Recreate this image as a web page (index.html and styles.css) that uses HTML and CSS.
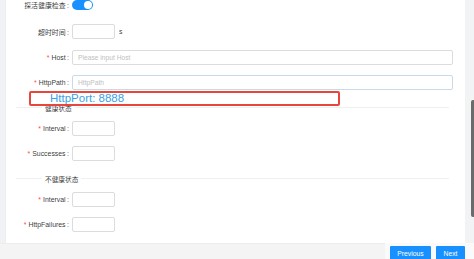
FILE: index.html
```html
<!DOCTYPE html>
<html>
<head>
<meta charset="utf-8">
<link rel="stylesheet" href="styles.css">
</head>
<body>
<div class="page">
  <div class="main">
    <div class="gutter-left"></div>
    <div class="card">
      <div class="row row-switch">
        <div class="label">探活健康检查<span class="colon">:</span></div>
        <div class="switch"><span class="knob"></span></div>
      </div>
      <div class="row">
        <div class="label">超时时间<span class="colon">:</span></div>
        <div class="input small"></div>
        <span class="suffix">s</span>
      </div>
      <div class="row">
        <div class="label"><span class="req">*</span>Host<span class="colon">:</span></div>
        <div class="input wide"><span class="ph">Please input Host</span></div>
      </div>
      <div class="row">
        <div class="label"><span class="req">*</span>HttpPath<span class="colon">:</span></div>
        <div class="input wide focus"><span class="ph">HttpPath</span></div>
      </div>
      <div class="divider"><span class="line-l"></span><span class="dtext">健康状态</span><span class="line-r"></span></div>
      <div class="row">
        <div class="label"><span class="req">*</span>Interval<span class="colon">:</span></div>
        <div class="input small"></div>
      </div>
      <div class="row">
        <div class="label"><span class="req">*</span>Successes<span class="colon">:</span></div>
        <div class="input small"></div>
      </div>
      <div class="divider"><span class="line-l"></span><span class="dtext">不健康状态</span><span class="line-r"></span></div>
      <div class="row">
        <div class="label"><span class="req">*</span>Interval<span class="colon">:</span></div>
        <div class="input small"></div>
      </div>
      <div class="row">
        <div class="label"><span class="req">*</span>HttpFailures<span class="colon">:</span></div>
        <div class="input small"></div>
      </div>
      <div class="row">
        <div class="label"></div>
        <div class="input mid"></div>
      </div>
      <div class="annotation">HttpPort: 8888</div>
    </div>
    <div class="gutter-right">
      <div class="thumb"></div>
    </div>
  </div>
  <div class="footer">
    <div class="footer-fill"></div>
    <div class="footer-actions">
      <button class="btn btn-prev">Previous</button>
      <button class="btn btn-next">Next</button>
    </div>
  </div>
</div>
</body>
</html>
```

FILE: styles.css
```css
html, body {
  margin: 0;
  padding: 0;
}
body {
  width: 474px;
  height: 259px;
  overflow: hidden;
  background: #ffffff;
  font-family: "Liberation Sans", "Noto Sans CJK SC", sans-serif;
  color: rgba(0, 0, 0, 0.8);
}
.page {
  display: flex;
  flex-direction: column;
  height: 259px;
}
.main {
  display: flex;
  height: 243px;
  overflow: hidden;
}
.gutter-left {
  width: 5px;
  background: #f0f2f5;
  border-right: 1px solid #eceef1;
}
.card {
  position: relative;
  flex: 1;
  background: #ffffff;
  overflow: hidden;
  padding-right: 12px;
}
.gutter-right {
  width: 9px;
  background: #f2f3f5;
  display: flex;
  flex-direction: column;
  align-items: flex-end;
}
.thumb {
  margin-top: 100px;
  width: 3px;
  height: 117px;
  background: #6b6b6b;
  border-radius: 2px 0 0 2px;
}
.row {
  display: flex;
  align-items: center;
  height: 15px;
  margin-bottom: 10.5px;
}
.row-switch {
  height: 10px;
  margin-bottom: 14px;
}
.label {
  width: 63px;
  flex: none;
  padding-right: 3px;
  text-align: right;
  font-size: 6.9px;
  white-space: nowrap;
  color: rgba(0, 0, 0, 0.82);
}
.colon {
  margin-left: 1.5px;
}
.req {
  color: #ff4d4f;
  margin-right: 2px;
}
.switch {
  position: relative;
  width: 21px;
  height: 10px;
  border-radius: 5px;
  background: #1890ff;
}
.knob {
  position: absolute;
  right: 1px;
  top: 1px;
  width: 8px;
  height: 8px;
  border-radius: 50%;
  background: #ffffff;
}
.input {
  box-sizing: border-box;
  height: 15px;
  border: 1px solid #dcdcdc;
  border-radius: 2px;
  background: #ffffff;
  display: flex;
  align-items: center;
  padding-left: 5px;
}
.input.small {
  width: 43px;
}
.input.mid {
  width: 57px;
}
.input.wide {
  flex: 1;
}
.input.focus {
  border-color: #c8dae8;
}
.ph {
  font-size: 6.7px;
  color: #c0c0c0;
}
.suffix {
  margin-left: 4px;
  font-size: 6.9px;
}
.divider {
  display: flex;
  align-items: center;
  height: 14px;
  margin-bottom: 6px;
  padding-left: 10px;
  padding-right: 4px;
}
.line-l {
  width: 26px;
  border-top: 1px solid #f0f0f0;
}
.line-r {
  flex: 1;
  border-top: 1px solid #f0f0f0;
}
.dtext {
  padding: 0 3px;
  font-size: 6.7px;
  color: rgba(0, 0, 0, 0.82);
}
.annotation {
  position: absolute;
  left: 23px;
  top: 91px;
  width: 311px;
  height: 15px;
  box-sizing: border-box;
  border: 2px solid rgb(230, 70, 60);
  border-radius: 2px;
  padding-left: 19px;
  font-size: 11.5px;
  line-height: 11px;
  color: rgb(58, 159, 230);
  background: rgba(255, 255, 255, 0.6);
}
.footer {
  display: flex;
  height: 16px;
}
.footer-fill {
  flex: 1;
  background: #f4f4f4;
  border-top: 1px solid #ededed;
}
.footer-actions {
  display: flex;
  gap: 5px;
  padding: 3px 9px 0 5px;
  background: #fafafa;
}
.btn {
  height: 15px;
  border: none;
  border-radius: 1px;
  background: #1890ff;
  color: #ffffff;
  font-family: "Liberation Sans", sans-serif;
  font-size: 6.8px;
  padding: 0;
  margin: 0;
}
.btn-prev {
  width: 41px;
}
.btn-next {
  width: 29px;
}
```
